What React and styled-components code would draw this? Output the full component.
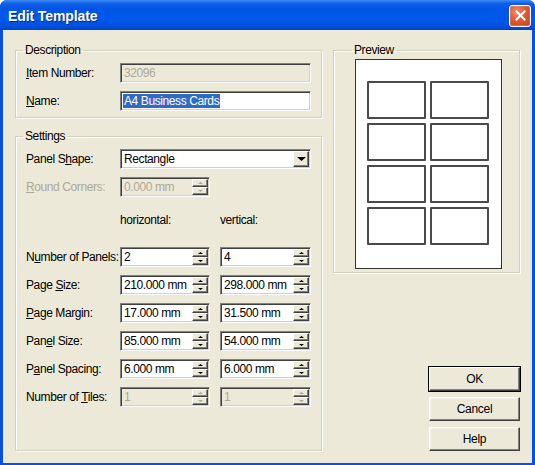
import React from 'react';
import styled, { createGlobalStyle, css } from 'styled-components';

const GlobalStyle = createGlobalStyle`
  html, body {
    margin: 0;
    padding: 0;
    background: #ffffff;
  }
  body {
    font-family: "Liberation Sans", Arial, sans-serif;
    font-size: 12px;
    letter-spacing: -0.4px;
    color: #000;
  }
`;

const Window = styled.div`
  width: 535px;
  height: 465px;
  box-sizing: border-box;
  display: flex;
  flex-direction: column;
  background: #0a4fe0;
  border-radius: 7px 7px 0 0;
  overflow: hidden;
`;

const TitleBar = styled.div`
  height: 30px;
  flex: none;
  display: flex;
  align-items: center;
  justify-content: space-between;
  padding: 0 4px 0 8px;
  background: linear-gradient(
    to bottom,
    #3d8cf5 0%,
    #0f5ee8 12%,
    #0055e5 30%,
    #0058ec 60%,
    #0050dd 88%,
    #0041c4 100%
  );
`;

const Title = styled.span`
  font-size: 14px;
  font-weight: bold;
  letter-spacing: -0.1px;
  color: #fff;
  text-shadow: 1px 1px 0 #0a2a8a;
  padding-top: 1px;
`;

const CloseButton = styled.button`
  width: 22px;
  height: 22px;
  padding: 0;
  margin-top: 1px;
  display: flex;
  align-items: center;
  justify-content: center;
  border: 1px solid #fff;
  border-radius: 3px;
  background: radial-gradient(circle at 35% 30%, #f0906a 0%, #e2582f 45%, #c83d18 100%);
  box-shadow: inset 0 0 0 1px rgba(255, 255, 255, 0.15);
`;

const Body = styled.div`
  flex: 1;
  margin: 0 3px 3px;
  background: #ece9d8;
  display: flex;
  gap: 11px;
  padding: 13px 12px 12px;
`;

const LeftColumn = styled.div`
  width: 307px;
  display: flex;
  flex-direction: column;
  gap: 11px;
`;

const RightColumn = styled.div`
  width: 187px;
  display: flex;
  flex-direction: column;
`;

const Group = styled.fieldset`
  margin: 0;
  min-width: 0;
  border: 1px solid #d0d0bf;
  box-shadow: 1px 1px 0 #fff, inset 1px 1px 0 #fff;
  padding: ${(p) => p.$pad || '6px 10px'};
  ${(p) =>
    p.$grow &&
    css`
      flex: 1;
    `}
`;

const Legend = styled.legend`
  line-height: 14px;
  padding: 0 2px;
  margin-left: -3px;
`;

const FormGrid = styled.div`
  display: grid;
  grid-template-columns: 84px 90px 91px;
  column-gap: 10px;
  row-gap: 8px;
  grid-auto-rows: minmax(20px, auto);
  align-items: center;
`;

const Label = styled.span`
  white-space: nowrap;
  color: ${(p) => (p.$disabled ? '#aca899' : '#000')};
`;

const ColumnHead = styled.span`
  height: 34px;
  box-sizing: border-box;
  display: flex;
  align-items: flex-end;
  padding-bottom: 12px;
  line-height: 14px;
`;

const sunken = css`
  border: 1px solid;
  border-color: #808080 #ffffff #ffffff #808080;
  box-shadow: inset 1px 1px 0 #404040, inset -1px -1px 0 #d4d0c8;
`;

const TextBox = styled.div`
  ${sunken}
  grid-column: ${(p) => p.$span || 'auto'};
  height: 20px;
  box-sizing: border-box;
  display: flex;
  align-items: center;
  padding: 0 2px 0 3px;
  background: ${(p) => (p.$disabled ? '#ece9d8' : '#fff')};
  color: ${(p) => (p.$disabled ? '#aca899' : '#000')};
  white-space: nowrap;
`;

const Value = styled.span`
  flex: 1;
  line-height: 14px;
`;

const Selected = styled.span`
  background: #316ac5;
  color: #fff;
  line-height: 14px;
  padding: 0 1px;
  margin-left: -1px;
`;

const raised = css`
  border: 1px solid;
  border-color: #fff #404040 #404040 #fff;
  box-shadow: inset -1px -1px 0 #808080;
  background: #ece9d8;
`;

const DropButton = styled.div`
  ${raised}
  width: 16px;
  height: 16px;
  box-sizing: border-box;
  display: flex;
  align-items: center;
  justify-content: center;
  margin-right: -1px;
`;

const SpinStack = styled.div`
  display: flex;
  flex-direction: column;
  width: 16px;
  height: 16px;
  margin-right: -1px;
`;

const SpinHalf = styled.div`
  ${raised}
  flex: 1;
  box-sizing: border-box;
  display: flex;
  align-items: center;
  justify-content: center;
`;

const Triangle = ({ dir = 'down', size = 3, color = '#000' }) => {
  const w = size * 2 + 1;
  const pts =
    dir === 'up' ? `0,${size} ${w},${size} ${w / 2},0` : `0,0 ${w},0 ${w / 2},${size}`;
  return (
    <svg width={w} height={size} viewBox={`0 0 ${w} ${size}`}>
      <polygon points={pts} fill={color} />
    </svg>
  );
};

const Spin = ({ value, disabled }) => (
  <TextBox $disabled={disabled}>
    <Value>{value}</Value>
    <SpinStack>
      <SpinHalf>
        <Triangle dir="up" size={2} color={disabled ? '#aca899' : '#000'} />
      </SpinHalf>
      <SpinHalf>
        <Triangle dir="down" size={2} color={disabled ? '#aca899' : '#000'} />
      </SpinHalf>
    </SpinStack>
  </TextBox>
);

const Key = styled.u`
  text-decoration: underline;
  text-underline-offset: 1px;
`;

const Page = styled.div`
  width: 147px;
  height: 210px;
  box-sizing: border-box;
  background: #fff;
  border: 1.5px solid #333;
  display: grid;
  align-content: start;
  justify-content: start;
`;

const Card = styled.div`
  box-sizing: border-box;
  border: 2px solid #4a4a4a;
  border-radius: 1px;
  background: #fff;
`;

const ButtonStack = styled.div`
  margin-top: auto;
  align-self: flex-end;
  display: flex;
  flex-direction: column;
  gap: 6px;
`;

const Button = styled.button`
  width: 91px;
  height: 24px;
  font-family: inherit;
  font-size: 12px;
  letter-spacing: -0.3px;
  color: #000;
  background: #ece9d8;
  border: 1px solid;
  border-color: #fff #404040 #404040 #fff;
  box-shadow: inset -1px -1px 0 #808080, inset 1px 1px 0 #f4f3ee;
  padding: 0;
  ${(p) =>
    p.$default &&
    css`
      box-shadow: 0 0 0 1px #000, inset -1px -1px 0 #808080;
    `}
`;

const template = {
  page: [210, 298],
  margin: [17, 31.5],
  panel: [85, 54],
  spacing: [6, 6],
  count: [2, 4],
};

const rows = [
  { label: ['N', 'u', 'mber of Panels:'], h: '2', v: '4' },
  { label: ['Page ', 'S', 'ize:'], h: '210.000 mm', v: '298.000 mm' },
  { label: ['', 'P', 'age Margin:'], h: '17.000 mm', v: '31.500 mm' },
  { label: ['Pan', 'e', 'l Size:'], h: '85.000 mm', v: '54.000 mm' },
  { label: ['P', 'a', 'nel Spacing:'], h: '6.000 mm', v: '6.000 mm' },
  { label: ['Number of ', 'T', 'iles:'], h: '1', v: '1', disabled: true },
];

function Preview() {
  const scale = 147 / template.page[0];
  const [cols, rowsCount] = template.count;
  const cw = template.panel[0] * scale;
  const ch = template.panel[1] * scale;
  const gx = template.spacing[0] * scale;
  const gy = template.spacing[1] * scale;
  const cells = Array.from({ length: cols * rowsCount });
  return (
    <Page
      style={{
        gridTemplateColumns: `repeat(${cols}, ${cw}px)`,
        gridAutoRows: `${ch}px`,
        columnGap: `${gx - 1}px`,
        rowGap: `${gy}px`,
        padding: `${template.margin[1] * scale - 1}px 0 0 ${template.margin[0] * scale - 1}px`,
      }}
    >
      {cells.map((_, i) => (
        <Card key={i} />
      ))}
    </Page>
  );
}

export default function App() {
  return (
    <>
      <GlobalStyle />
      <Window>
        <TitleBar>
          <Title>Edit Template</Title>
          <CloseButton aria-label="Close">
            <svg width="11" height="11" viewBox="0 0 11 11">
              <path d="M1.5 1.5 L9.5 9.5 M9.5 1.5 L1.5 9.5" stroke="#fff" strokeWidth="2" strokeLinecap="square" />
            </svg>
          </CloseButton>
        </TitleBar>
        <Body>
          <LeftColumn>
            <Group>
              <Legend>Description</Legend>
              <FormGrid>
                <Label>
                  <Key>I</Key>tem Number:
                </Label>
                <TextBox $span="2 / 4" $disabled>
                  <Value>32096</Value>
                </TextBox>
                <Label>
                  <Key>N</Key>ame:
                </Label>
                <TextBox $span="2 / 4">
                  <Value>
                    <Selected>A4 Business Cards</Selected>
                  </Value>
                </TextBox>
              </FormGrid>
            </Group>
            <Group $grow $pad="6px 10px 43px">
              <Legend>Settings</Legend>
              <FormGrid>
                <Label>
                  Panel S<Key>h</Key>ape:
                </Label>
                <TextBox $span="2 / 4">
                  <Value>Rectangle</Value>
                  <DropButton>
                    <Triangle dir="down" size={4} />
                  </DropButton>
                </TextBox>
                <Label $disabled>
                  <Key>R</Key>ound Corners:
                </Label>
                <Spin value="0.000 mm" disabled />
                <span />
                <span />
                <ColumnHead>horizontal:</ColumnHead>
                <ColumnHead>vertical:</ColumnHead>
                {rows.map((r) => (
                  <React.Fragment key={r.label.join('')}>
                    <Label>
                      {r.label[0]}
                      <Key>{r.label[1]}</Key>
                      {r.label[2]}
                    </Label>
                    <Spin value={r.h} disabled={r.disabled} />
                    <Spin value={r.v} disabled={r.disabled} />
                  </React.Fragment>
                ))}
              </FormGrid>
            </Group>
          </LeftColumn>
          <RightColumn>
            <Group $pad="2px 17px 3px 21px">
              <Legend>Preview</Legend>
              <Preview />
            </Group>
            <ButtonStack>
              <Button $default>OK</Button>
              <Button>Cancel</Button>
              <Button>Help</Button>
            </ButtonStack>
          </RightColumn>
        </Body>
      </Window>
    </>
  );
}
